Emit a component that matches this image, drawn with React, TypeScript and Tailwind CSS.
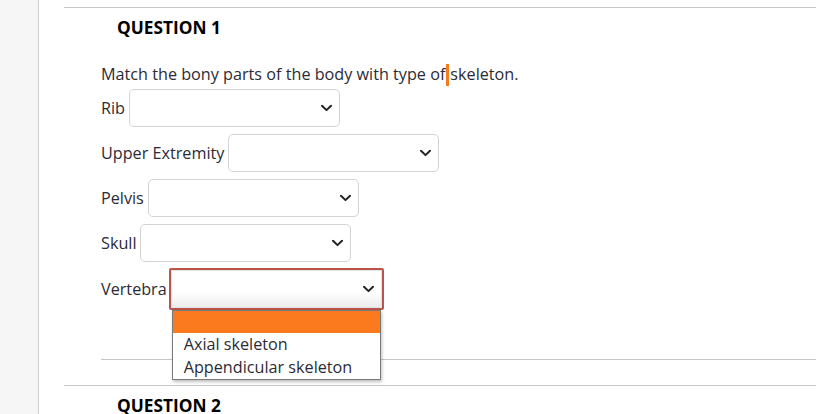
import React from 'react';

const rows = [
  { label: 'Rib' },
  { label: 'Upper Extremity' },
  { label: 'Pelvis' },
  { label: 'Skull' },
];

function Chevron() {
  return (
    <svg className="absolute right-[7px] top-1/2 -translate-y-1/2" width="11" height="7" viewBox="0 0 11 7" fill="none">
      <path d="M1 1.2 L5.5 5.6 L10 1.2" stroke="#222" strokeWidth="2" strokeLinecap="round" strokeLinejoin="round" />
    </svg>
  );
}

function FakeSelect({ focused = false }: { focused?: boolean }) {
  return (
    <div
      className={
        focused
          ? 'relative w-[215px] h-[42px] -my-[2px] border-2 border-[#b9554a] rounded-[2px] p-0'
          : 'relative w-[211px] h-[38px] border border-[#d3d3d3] rounded-[5px] bg-white'
      }
    >
      {focused ? (
        <div className="relative w-full h-full border border-[#e2e2e2] bg-gradient-to-b from-white from-60% to-[#ececec]">
          <Chevron />
        </div>
      ) : (
        <Chevron />
      )}
    </div>
  );
}

export default function App() {
  return (
    <div className="flex w-[816px] h-[414px] overflow-hidden bg-white text-[#2b2b35]" style={{ fontFamily: '"Open Sans", "Noto Sans", sans-serif' }}>
      {/* Left rail */}
      <aside className="w-[39px] shrink-0 bg-[#f6f6f6] border-r border-[#cfcfcf]" />

      {/* Main */}
      <main className="flex-1 pl-[25px] pt-[7px]">
        {/* Question 1 */}
        <section className="border-t border-[#c6c6c6] pl-[37px]">
          <h2 className="pl-4 pt-[8px] text-[17.3px] leading-[24px] font-bold text-black">QUESTION 1</h2>

          <p className="mt-[22px] text-[16.2px] leading-[24px]">
            Match the bony parts of the body with type of
            <span className="inline-block w-[3px] h-[22px] mx-[1px] bg-[#f47b20] align-[-6px]" />
            skeleton.
          </p>

          <div className="mt-[3px] flex flex-col gap-[7px]">
            {rows.map((r) => (
              <div key={r.label} className="flex items-center gap-[4px] text-[16.2px] leading-[24px]">
                <span>{r.label}</span>
                <FakeSelect />
              </div>
            ))}

            <div className="relative mt-[1px] flex items-center gap-[2px] text-[16.2px] leading-[24px]">
              <span>Vertebra</span>
              <div className="relative">
                <FakeSelect focused />
                {/* open option list */}
                <ul className="absolute left-[3px] top-[40px] z-10 w-[209px] border border-[#7a7a7a] bg-white shadow-[1px_2px_3px_rgba(0,0,0,0.25)] text-[16.2px] leading-[23px]">
                  <li className="h-[22px] bg-[#fb7a1e]" />
                  <li className="pl-[11px]">Axial skeleton</li>
                  <li className="pl-[11px]">Appendicular skeleton</li>
                </ul>
              </div>
            </div>
          </div>

          <div className="mt-[51px] border-t border-[#c6c6c6]" />
        </section>

        {/* Question 2 */}
        <section className="mt-[25px] border-t border-[#c6c6c6] pl-[37px]">
          <h2 className="pl-4 pt-[8px] text-[17.3px] leading-[24px] font-bold text-black">QUESTION 2</h2>
        </section>
      </main>
    </div>
  );
}
